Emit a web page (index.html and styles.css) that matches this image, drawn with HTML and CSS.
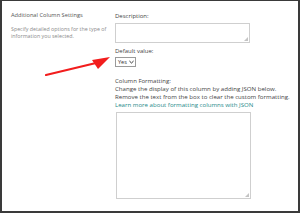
FILE: index.html
```html
<!DOCTYPE html>
<html>
<head>
<meta charset="utf-8">
<link rel="stylesheet" href="styles.css">
</head>
<body>
<div class="frame">
  <div class="left">
    <div class="heading">Additional Column Settings</div>
    <div class="desc">Specify detailed options for the type of<br>information you selected.</div>
  </div>
  <div class="right">
    <div class="label">Description:</div>
    <div class="textarea small"><span class="grip"></span></div>
    <div class="label dv">Default value:</div>
    <div class="select">Yes <svg width="5" height="4" viewBox="0 0 6 4"><path d="M0.5 0.8 L3 3.2 L5.5 0.8" fill="none" stroke="#333" stroke-width="1.2"/></svg></div>
    <div class="label cf">Column Formatting:</div>
    <div class="text">Change the display of this column by adding JSON below.</div>
    <div class="text">Remove the text from the box to clear the custom formatting.</div>
    <div class="link">Learn more about formatting columns with JSON</div>
    <div class="textarea big"><span class="grip"></span></div>
  </div>
  <svg class="arrow" width="300" height="213" viewBox="0 0 300 213">
    <line x1="46" y1="75" x2="96" y2="63" stroke="#f21d1d" stroke-width="2.2" stroke-linecap="round"/>
    <polygon points="110,57 92,60 98,69" fill="#f21d1d"/>
  </svg>
</div>
</body>
</html>
```
FILE: styles.css
```css
html, body { margin: 0; padding: 0; background: #fff; }
body { width: 300px; height: 213px; overflow: hidden; font-family: "Open Sans", "Noto Sans", sans-serif; }
.frame {
  position: relative;
  box-sizing: border-box;
  width: 300px; height: 213px;
  border: 2px solid #3a3a3a;
  border-top-width: 1px;
  display: grid;
  grid-template-columns: 104px 1fr;
  background: #fff;
}
.left { padding: 11px 0 0 9px; white-space: nowrap; }
.heading { font-size: 5.7px; color: #555; line-height: 7px; }
.desc { margin-top: 7px; font-size: 5.3px; color: #8a8a8a; line-height: 6.5px; }
.right { padding: 12px 0 0 9px; color: #444; white-space: nowrap; }
.label { font-size: 6px; line-height: 7px; }
.textarea { position: relative; box-sizing: border-box; border: 1px solid #cfcfcf; background: #fff; }
.textarea.small { width: 135px; height: 20px; margin-top: 3px; }
.textarea.big { width: 135px; height: 87px; margin-top: 3px; margin-left: 1px; }
.grip { position: absolute; right: 1px; bottom: 1px; width: 0; height: 0; border-left: 4px solid transparent; border-bottom: 4px solid #c4c4c4; }
.dv { margin-top: 5px; }
.select {
  box-sizing: border-box; width: 21px; height: 10px; margin-top: 2px;
  border: 1px solid #9a9a9a; font-size: 5.5px; line-height: 8px; color: #333;
  display: flex; align-items: center; gap: 2px; padding-left: 2px;
}
.cf { margin-top: 10px; }
.text { font-size: 6.1px; line-height: 8px; }
.label.cf { line-height: 8px; }
.link { font-size: 6.1px; line-height: 8px; color: #1f8a8a; }
.arrow { position: absolute; left: -2px; top: -1px; pointer-events: none; }
```
